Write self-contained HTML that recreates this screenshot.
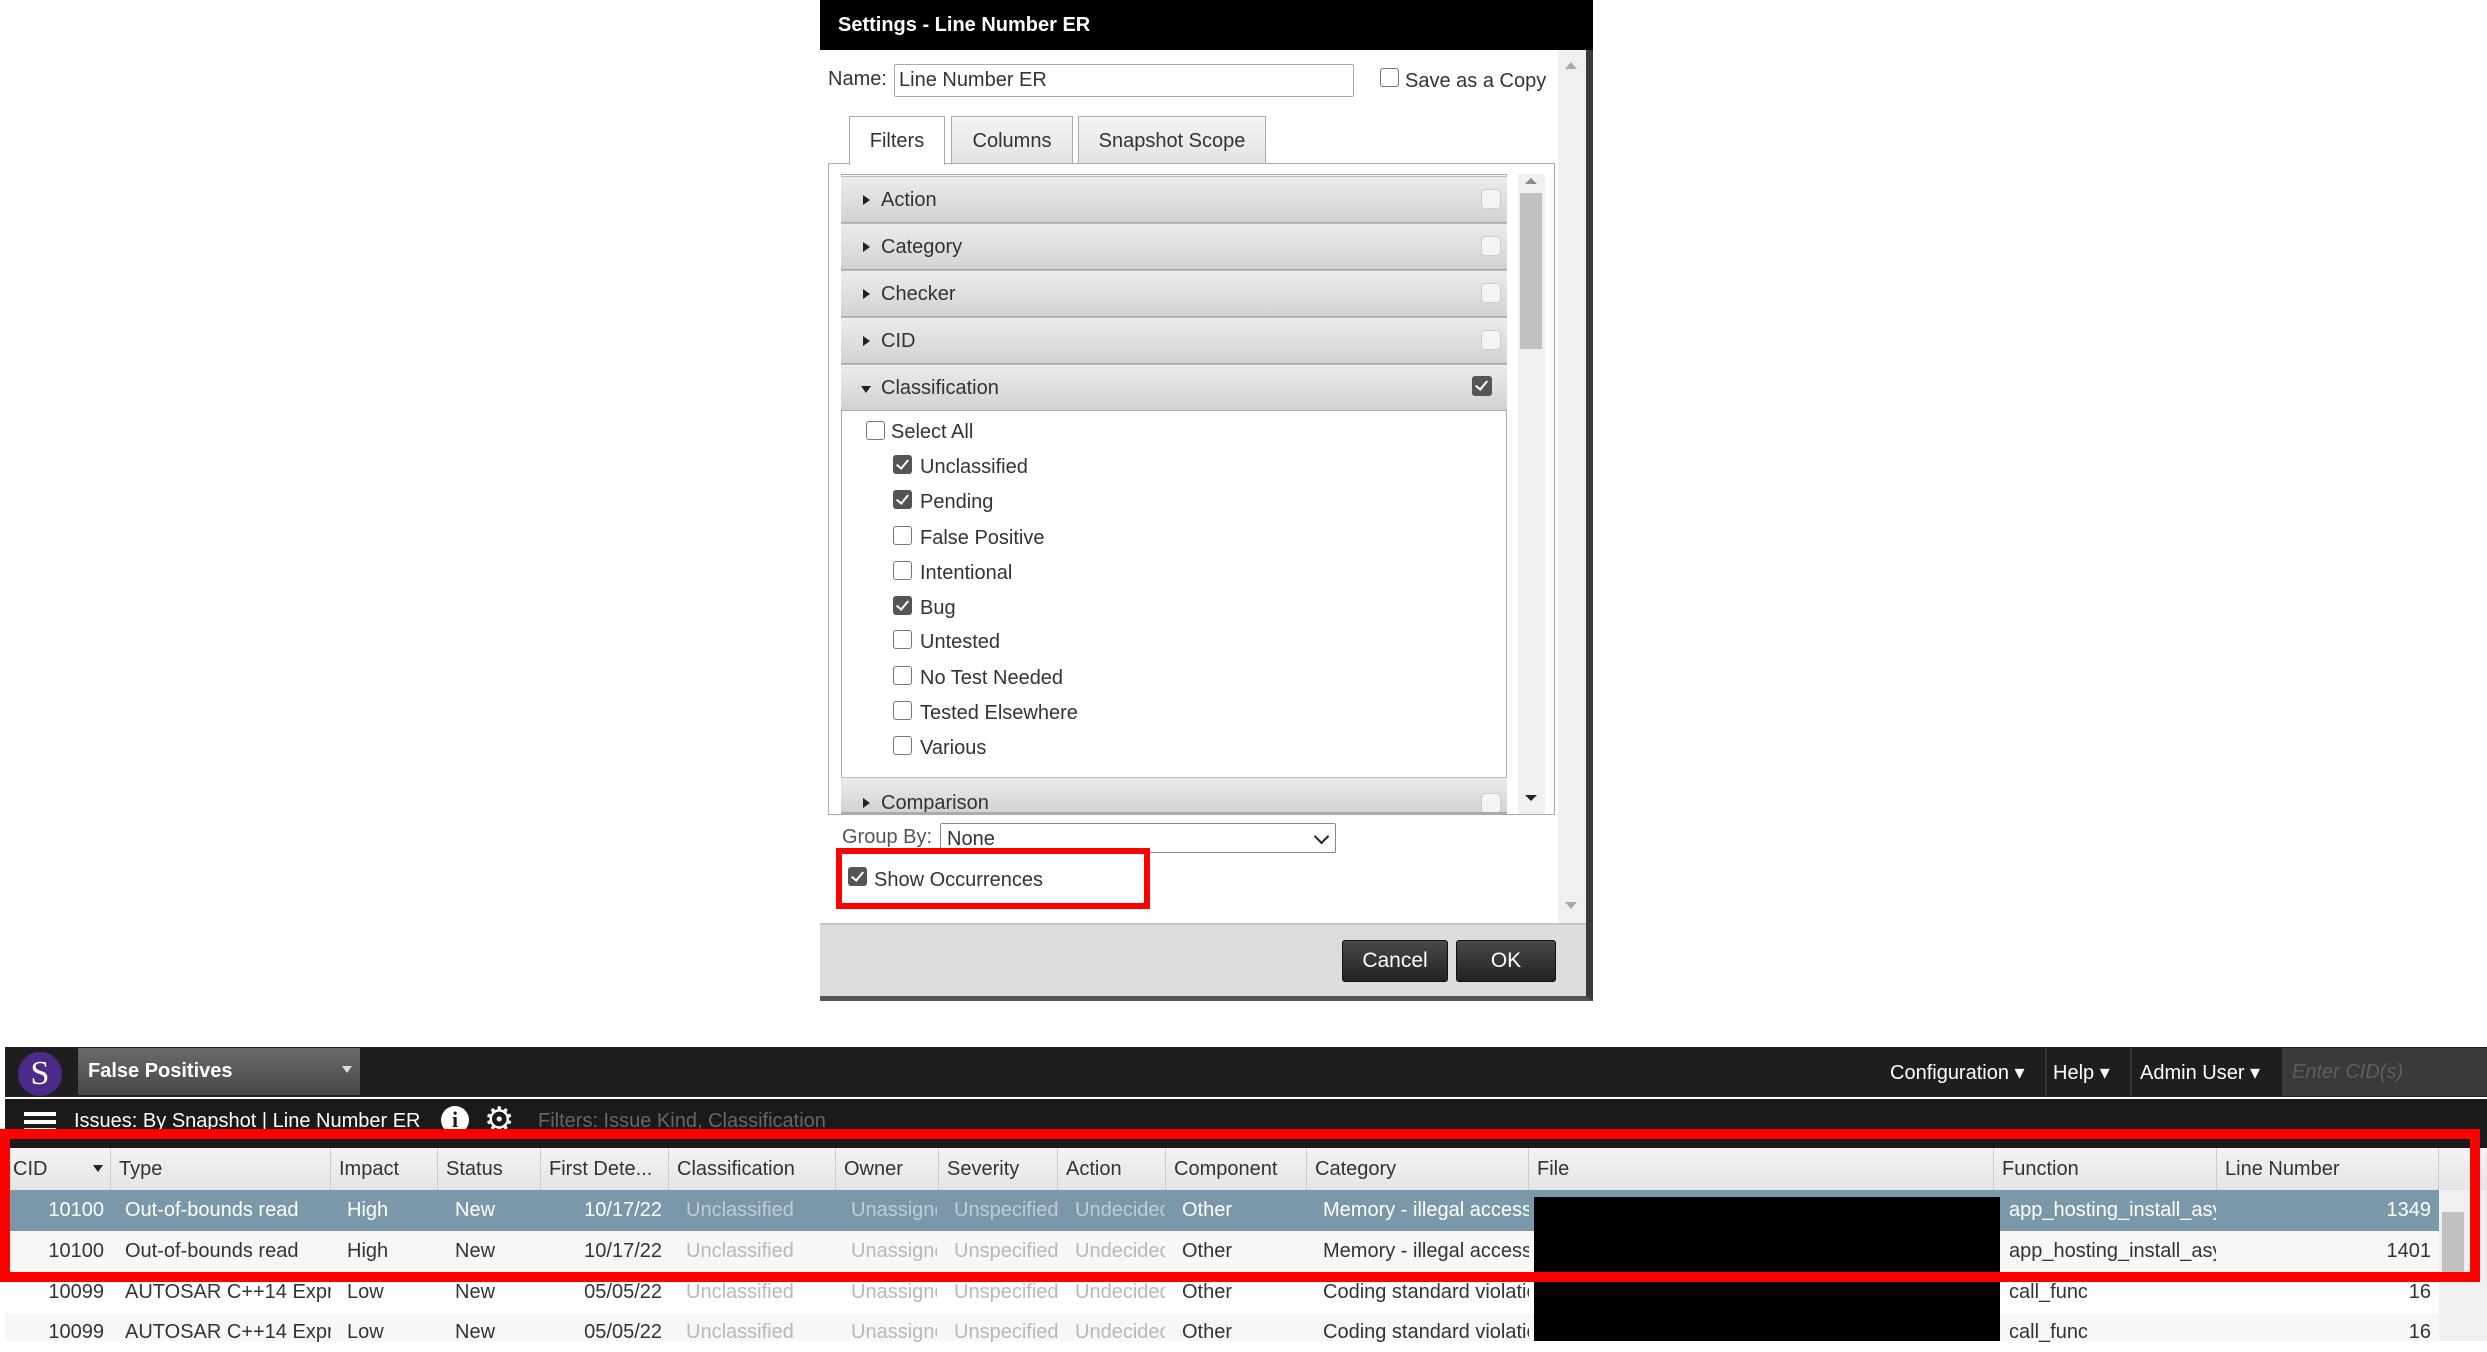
<!DOCTYPE html>
<html><head><meta charset="utf-8"><style>
*{box-sizing:border-box;margin:0;padding:0}
body{width:2487px;height:1341px;background:#fff;position:relative;overflow:hidden;font-family:"Liberation Sans",Arial,sans-serif;color:#333}
.a{position:absolute;white-space:nowrap}
.hdr{position:absolute;left:841px;width:666px;height:47px;background:linear-gradient(#ececec,#d2d2d2);border-top:1px solid #bbb;border-bottom:1px solid #aaa;font-size:20px;line-height:46px;padding-left:40px}
.hdr .tri{position:absolute;left:22px;top:18px;width:0;height:0;border-left:7px solid #222;border-top:5px solid transparent;border-bottom:5px solid transparent}
.hdr .cb{position:absolute;left:640px;top:12px;width:20px;height:20px;border:1px solid #ccc;border-radius:4px;background:#f4f4f4}
.cbx{position:absolute;width:19px;height:19px;border:1.5px solid #777;border-radius:3px;background:#fff}
.cbx.on{background:#555;border-color:#555}
.cbx.on:after{content:"";position:absolute;left:5px;top:1px;width:5px;height:10px;border:solid #fff;border-width:0 2.5px 2.5px 0;transform:rotate(40deg)}
.it{position:absolute;font-size:20px;color:#333}
.btn{position:absolute;background:linear-gradient(#4a4a4a,#222);color:#fff;font-size:21px;text-align:center;border-radius:3px;border:1px solid #111}
.col{position:absolute;top:1148px;height:42px;font-size:20px;line-height:42px;padding-left:8px;color:#333;border-right:1px solid #ccc;background:linear-gradient(#f4f4f4,#e4e4e4)}
.cell{position:absolute;font-size:20px;line-height:40px;white-space:nowrap;overflow:hidden}
</style></head><body>
<!-- Dialog -->
<div class="a" style="left:820px;top:0;width:773px;height:1001px;background:#fff;border-right:7px solid #3a3a3a;border-bottom:5px solid #555"></div>
<div class="a" style="left:820px;top:0;width:773px;height:50px;background:#000;color:#fff;font-weight:bold;font-size:20px;line-height:50px;padding-left:18px">Settings - Line Number ER</div>
<div class="a" style="left:1558px;top:50px;width:28px;height:873px;background:#f0f0f0"></div>
<div class="a" style="left:1565px;top:62px;border-left:6px solid transparent;border-right:6px solid transparent;border-bottom:7px solid #aaa"></div>
<div class="a" style="left:1565px;top:902px;border-left:6px solid transparent;border-right:6px solid transparent;border-top:7px solid #aaa"></div>
<div class="a" style="left:828px;top:68px;font-size:20px">Name:</div>
<div class="a" style="left:894px;top:64px;width:460px;height:33px;border:1px solid #aaa;border-radius:2px;font-size:20px;line-height:31px;padding-left:4px">Line Number ER</div>
<div class="cbx" style="left:1380px;top:68px"></div>
<div class="a" style="left:1405px;top:70px;font-size:20px">Save as a Copy</div>
<!-- tabs -->
<div class="a" style="left:828px;top:163px;width:727px;height:652px;border:1px solid #aaa;border-top:1px solid #aaa"></div>
<div class="a" style="left:849px;top:116px;width:96px;height:49px;background:#fff;border:1px solid #aaa;border-bottom:none;font-size:20px;line-height:48px;text-align:center">Filters</div>
<div class="a" style="left:951px;top:116px;width:122px;height:47px;background:linear-gradient(#f4f4f4,#e4e4e4);border:1px solid #aaa;border-bottom:none;font-size:20px;line-height:48px;text-align:center">Columns</div>
<div class="a" style="left:1078px;top:116px;width:188px;height:47px;background:linear-gradient(#f4f4f4,#e4e4e4);border:1px solid #aaa;border-bottom:none;font-size:20px;line-height:48px;text-align:center">Snapshot Scope</div>
<!-- list -->
<div class="a" style="left:841px;top:174px;width:666px;height:640px;border:1px solid #aaa;background:#fff"></div>
<div class="hdr" style="top:176px"><span class="tri"></span>Action<span class="cb"></span></div>
<div class="hdr" style="top:223px"><span class="tri"></span>Category<span class="cb"></span></div>
<div class="hdr" style="top:270px"><span class="tri"></span>Checker<span class="cb"></span></div>
<div class="hdr" style="top:317px"><span class="tri"></span>CID<span class="cb"></span></div>
<div class="hdr" style="top:364px"><span class="tri" style="left:20px;top:21px;border-top:7px solid #222;border-left:5px solid transparent;border-right:5px solid transparent;border-bottom:0"></span>Classification<span class="cbx on" style="left:631px;top:11px;width:20px;height:20px"></span></div>
<div class="cbx" style="left:866px;top:421px"></div><div class="it" style="left:891px;top:421px">Select All</div>
<div class="cbx on" style="left:893px;top:455px"></div><div class="it" style="left:920px;top:456px">Unclassified</div>
<div class="cbx on" style="left:893px;top:490px"></div><div class="it" style="left:920px;top:491px">Pending</div>
<div class="cbx" style="left:893px;top:526px"></div><div class="it" style="left:920px;top:527px">False Positive</div>
<div class="cbx" style="left:893px;top:561px"></div><div class="it" style="left:920px;top:562px">Intentional</div>
<div class="cbx on" style="left:893px;top:596px"></div><div class="it" style="left:920px;top:597px">Bug</div>
<div class="cbx" style="left:893px;top:630px"></div><div class="it" style="left:920px;top:631px">Untested</div>
<div class="cbx" style="left:893px;top:666px"></div><div class="it" style="left:920px;top:667px">No Test Needed</div>
<div class="cbx" style="left:893px;top:701px"></div><div class="it" style="left:920px;top:702px">Tested Elsewhere</div>
<div class="cbx" style="left:893px;top:736px"></div><div class="it" style="left:920px;top:737px">Various</div>
<div class="hdr" style="top:777px;height:36px;overflow:hidden;line-height:50px"><span class="tri" style="top:20px"></span>Comparison<span class="cb" style="top:15px"></span></div>
<div class="a" style="left:1518px;top:174px;width:27px;height:640px;background:#f0f0f0"></div>
<div class="a" style="left:1520px;top:193px;width:22px;height:156px;background:#c1c1c1"></div>
<div class="a" style="left:1525px;top:178px;border-left:6px solid transparent;border-right:6px solid transparent;border-bottom:6px solid #888"></div>
<div class="a" style="left:1525px;top:795px;border-left:6px solid transparent;border-right:6px solid transparent;border-top:6px solid #222"></div>
<!-- group by -->
<div class="a" style="left:842px;top:826px;font-size:20px;color:#555">Group By:</div>
<div class="a" style="left:940px;top:823px;width:396px;height:30px;border:1px solid #888;border-radius:2px;font-size:20px;line-height:30px;padding-left:6px;color:#333">None<span style="position:absolute;right:8px;top:7px;width:11px;height:11px;border:solid #222;border-width:0 2.5px 2.5px 0;transform:rotate(45deg)"></span></div>
<div class="a" style="left:836px;top:848px;width:314px;height:61px;border:6px solid #f00"></div>
<div class="cbx on" style="left:848px;top:867px"></div>
<div class="a" style="left:874px;top:869px;font-size:20px">Show Occurrences</div>
<!-- footer -->
<div class="a" style="left:820px;top:923px;width:766px;height:73px;background:#dcdcdc;border-top:2px solid #c4c4c4"></div>
<div class="btn" style="left:1342px;top:940px;width:106px;height:42px;line-height:40px">Cancel</div>
<div class="btn" style="left:1456px;top:940px;width:100px;height:42px;line-height:40px">OK</div>

<!-- App -->
<div class="a" style="left:5px;top:1047px;width:2482px;height:50px;background:#1e1e1e"></div>
<div class="a" style="left:18px;top:1052px;width:44px;height:44px;border-radius:50%;background:#4b2a8a;color:#fff;font-family:'Liberation Serif',serif;font-size:34px;text-align:center;line-height:44px">S</div>
<div class="a" style="left:78px;top:1048px;width:282px;height:47px;background:linear-gradient(#6a6a6a,#474747);color:#fff;font-weight:bold;font-size:20px;line-height:47px;padding-left:10px">False Positives<span style="position:absolute;right:8px;top:18px;border-left:5px solid transparent;border-right:5px solid transparent;border-top:7px solid #ddd"></span></div>
<div class="a" style="left:1890px;top:1060px;color:#fff;font-size:20px">Configuration ▾</div>
<div class="a" style="left:2045px;top:1048px;width:2px;height:48px;background:#333"></div>
<div class="a" style="left:2053px;top:1060px;color:#fff;font-size:20px">Help ▾</div>
<div class="a" style="left:2130px;top:1048px;width:2px;height:48px;background:#333"></div>
<div class="a" style="left:2140px;top:1060px;color:#fff;font-size:20px">Admin User ▾</div>
<div class="a" style="left:2282px;top:1048px;width:205px;height:48px;background:#3a3a3a;color:#5f5f5f;font-style:italic;font-size:20px;line-height:48px;padding-left:10px">Enter CID(s)</div>
<div class="a" style="left:5px;top:1099px;width:2482px;height:50px;background:#1a1a1a"></div>
<div class="a" style="left:24px;top:1112px;width:32px;height:4px;background:#fff;box-shadow:0 8px 0 #fff,0 16px 0 #fff"></div>
<div class="a" style="left:74px;top:1110px;color:#fff;font-size:20px">Issues: By Snapshot | Line Number ER</div>
<div class="a" style="left:441px;top:1106px;width:28px;height:28px;border-radius:50%;background:#fff;color:#1a1a1a;font-weight:bold;font-size:22px;text-align:center;line-height:28px;font-family:'Liberation Serif',serif">i</div>
<div class="a" style="left:484px;top:1100px;color:#fff;font-size:34px">⚙</div>
<div class="a" style="left:538px;top:1110px;color:#666;font-size:20px">Filters: Issue Kind, Classification</div>
<!-- header row -->
<div class="col" style="left:5px;width:106px">CID<span style="position:absolute;left:88px;top:17px;border-left:5px solid transparent;border-right:5px solid transparent;border-top:7px solid #222"></span></div>
<div class="col" style="left:111px;width:220px">Type</div>
<div class="col" style="left:331px;width:107px">Impact</div>
<div class="col" style="left:438px;width:103px">Status</div>
<div class="col" style="left:541px;width:128px">First Dete...</div>
<div class="col" style="left:669px;width:167px">Classification</div>
<div class="col" style="left:836px;width:103px">Owner</div>
<div class="col" style="left:939px;width:119px">Severity</div>
<div class="col" style="left:1058px;width:108px">Action</div>
<div class="col" style="left:1166px;width:141px">Component</div>
<div class="col" style="left:1307px;width:222px">Category</div>
<div class="col" style="left:1529px;width:465px">File</div>
<div class="col" style="left:1994px;width:223px">Function</div>
<div class="col" style="left:2217px;width:222px">Line Number</div>
<div class="col" style="left:2439px;width:48px;border:none"></div>
<!-- rows -->
<div class="a" style="left:5px;top:1190px;width:2434px;height:41px;background:#7b98aa"></div>
<div class="a" style="left:5px;top:1231px;width:2434px;height:50px;background:#f7f7f7"></div>
<div class="a" style="left:5px;top:1281px;width:2434px;height:33px;background:#fff"></div>
<div class="a" style="left:5px;top:1314px;width:2434px;height:27px;background:#f7f7f7"></div>
<div class="a" style="left:2439px;top:1190px;width:48px;height:151px;background:#f0f0f0"></div>
<div class="a" style="left:2442px;top:1212px;width:22px;height:60px;background:#c1c1c1"></div>

<div style="color:#fff">
<div class="cell" style="left:5px;top:1190px;width:99px;text-align:right">10100</div>
<div class="cell" style="left:125px;top:1190px">Out-of-bounds read</div>
<div class="cell" style="left:347px;top:1190px">High</div>
<div class="cell" style="left:455px;top:1190px">New</div>
<div class="cell" style="left:544px;top:1190px;width:118px;text-align:right">10/17/22</div>
<div class="cell" style="left:686px;top:1190px;color:#c0ccd4">Unclassified</div>
<div class="cell" style="left:851px;top:1190px;width:86px;color:#c0ccd4">Unassigned</div>
<div class="cell" style="left:954px;top:1190px;width:104px;color:#c0ccd4">Unspecified</div>
<div class="cell" style="left:1075px;top:1190px;width:90px;color:#c0ccd4">Undecided</div>
<div class="cell" style="left:1182px;top:1190px">Other</div>
<div class="cell" style="left:1323px;top:1190px;width:206px">Memory - illegal access</div>
<div class="cell" style="left:2009px;top:1190px;width:207px">app_hosting_install_async</div>
<div class="cell" style="left:2217px;top:1190px;width:214px;text-align:right">1349</div>
</div>
<div style="color:#333">
<div class="cell" style="left:5px;top:1231px;width:99px;text-align:right">10100</div>
<div class="cell" style="left:125px;top:1231px">Out-of-bounds read</div>
<div class="cell" style="left:347px;top:1231px">High</div>
<div class="cell" style="left:455px;top:1231px">New</div>
<div class="cell" style="left:544px;top:1231px;width:118px;text-align:right">10/17/22</div>
<div class="cell" style="left:686px;top:1231px;color:#b8b8b8">Unclassified</div>
<div class="cell" style="left:851px;top:1231px;width:86px;color:#b8b8b8">Unassigned</div>
<div class="cell" style="left:954px;top:1231px;width:104px;color:#b8b8b8">Unspecified</div>
<div class="cell" style="left:1075px;top:1231px;width:90px;color:#b8b8b8">Undecided</div>
<div class="cell" style="left:1182px;top:1231px">Other</div>
<div class="cell" style="left:1323px;top:1231px;width:206px">Memory - illegal access</div>
<div class="cell" style="left:2009px;top:1231px;width:207px">app_hosting_install_async</div>
<div class="cell" style="left:2217px;top:1231px;width:214px;text-align:right">1401</div>

<div class="cell" style="left:5px;top:1272px;width:99px;text-align:right">10099</div>
<div class="cell" style="left:125px;top:1272px;width:206px">AUTOSAR C++14 Expr</div>
<div class="cell" style="left:347px;top:1272px">Low</div>
<div class="cell" style="left:455px;top:1272px">New</div>
<div class="cell" style="left:544px;top:1272px;width:118px;text-align:right">05/05/22</div>
<div class="cell" style="left:686px;top:1272px;color:#b8b8b8">Unclassified</div>
<div class="cell" style="left:851px;top:1272px;width:86px;color:#b8b8b8">Unassigned</div>
<div class="cell" style="left:954px;top:1272px;width:104px;color:#b8b8b8">Unspecified</div>
<div class="cell" style="left:1075px;top:1272px;width:90px;color:#b8b8b8">Undecided</div>
<div class="cell" style="left:1182px;top:1272px">Other</div>
<div class="cell" style="left:1323px;top:1272px;width:206px">Coding standard violation</div>
<div class="cell" style="left:2009px;top:1272px">call_func</div>
<div class="cell" style="left:2217px;top:1272px;width:214px;text-align:right">16</div>

<div class="cell" style="left:5px;top:1312px;width:99px;text-align:right">10099</div>
<div class="cell" style="left:125px;top:1312px;width:206px">AUTOSAR C++14 Expr</div>
<div class="cell" style="left:347px;top:1312px">Low</div>
<div class="cell" style="left:455px;top:1312px">New</div>
<div class="cell" style="left:544px;top:1312px;width:118px;text-align:right">05/05/22</div>
<div class="cell" style="left:686px;top:1312px;color:#b8b8b8">Unclassified</div>
<div class="cell" style="left:851px;top:1312px;width:86px;color:#b8b8b8">Unassigned</div>
<div class="cell" style="left:954px;top:1312px;width:104px;color:#b8b8b8">Unspecified</div>
<div class="cell" style="left:1075px;top:1312px;width:90px;color:#b8b8b8">Undecided</div>
<div class="cell" style="left:1182px;top:1312px">Other</div>
<div class="cell" style="left:1323px;top:1312px;width:206px">Coding standard violation</div>
<div class="cell" style="left:2009px;top:1312px">call_func</div>
<div class="cell" style="left:2217px;top:1312px;width:214px;text-align:right">16</div>
</div>
<div class="a" style="left:1534px;top:1197px;width:466px;height:144px;background:#000"></div>
<div class="a" style="left:0;top:1129px;width:2480px;height:153px;border:10px solid #f00"></div>
</body></html>
